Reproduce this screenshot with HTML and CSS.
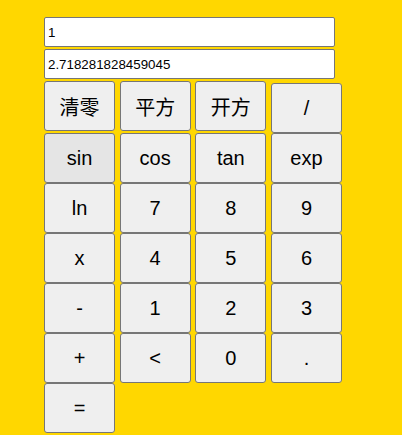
FILE: index.html
```html
<!DOCTYPE html>
<html>
<head>
<meta charset="utf-8">
<link rel="stylesheet" href="styles.css">
</head>
<body>
<div class="calc">
  <input class="display" type="text" value="1">
  <input class="display" type="text" value="2.718281828459045">
  <div class="keys">
    <button class="key">清零</button>
    <button class="key">平方</button>
    <button class="key">开方</button>
    <button class="key low">/</button>
    <button class="key hover">sin</button>
    <button class="key">cos</button>
    <button class="key">tan</button>
    <button class="key">exp</button>
    <button class="key">ln</button>
    <button class="key">7</button>
    <button class="key">8</button>
    <button class="key">9</button>
    <button class="key">x</button>
    <button class="key">4</button>
    <button class="key">5</button>
    <button class="key">6</button>
    <button class="key">-</button>
    <button class="key">1</button>
    <button class="key">2</button>
    <button class="key">3</button>
    <button class="key">+</button>
    <button class="key">&lt;</button>
    <button class="key">0</button>
    <button class="key">.</button>
    <button class="key">=</button>
  </div>
</div>
</body>
</html>
```
FILE: styles.css
```css
html, body {
  margin: 0;
  padding: 0;
  background: #ffd700;
  height: 100%;
}
body {
  padding: 17px 0 0 44px;
  box-sizing: border-box;
  font-family: "Liberation Sans", "Noto Sans CJK SC", sans-serif;
}
.calc {
  display: flex;
  flex-direction: column;
  align-items: flex-start;
}
.display {
  box-sizing: border-box;
  width: 291px;
  height: 30px;
  margin: 0 0 2px 0;
  padding: 1px 3px;
  border: 1px solid #767676;
  border-radius: 2px;
  background: #fff;
  font-family: "Liberation Sans", sans-serif;
  font-size: 13.33px;
  color: #000;
  outline: none;
}
.keys {
  display: grid;
  grid-template-columns: repeat(4, 71px);
  column-gap: 4.67px;
  grid-template-rows: 52px;
  grid-auto-rows: 50px;
  align-items: start;
}
.key {
  box-sizing: border-box;
  width: 71px;
  height: 50px;
  margin: 0;
  padding: 0;
  border: 1px solid #767676;
  border-radius: 3px;
  background: #efefef;
  color: #000;
  font-family: "Liberation Sans", "Noto Sans CJK SC", sans-serif;
  font-size: 20px;
}
.key.low {
  margin-top: 2px;
}
.key.hover {
  background: #e5e5e5;
}
```
